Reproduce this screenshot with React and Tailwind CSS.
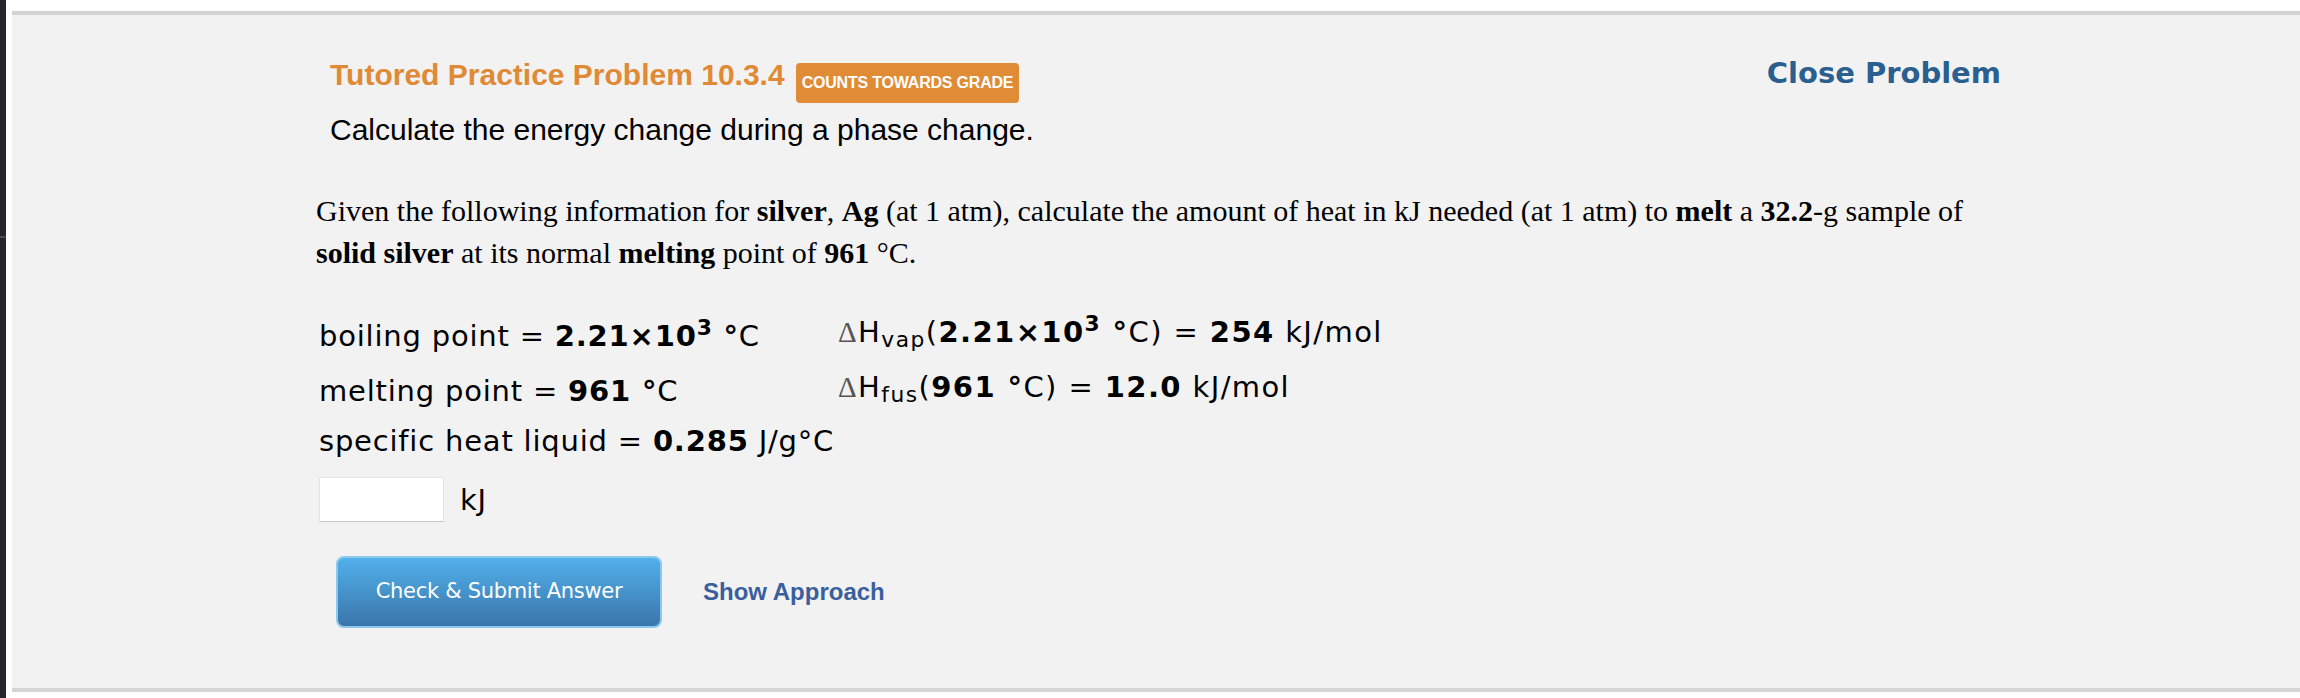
import React from "react";

const serif = { fontFamily: '"Liberation Serif", "Times New Roman", serif' };

const Delta = () => <span className="font-['Liberation_Serif',serif] text-[#555]">Δ</span>;

export default function App() {
  return (
    <div className="flex h-[698px] bg-white">
      <div className="relative w-[6px] bg-[#22262b]">
        <div className="absolute left-0 top-[236px] h-[2px] w-[6px] bg-[#4a4e53]" />
      </div>
      <div className="ml-[6px] flex-1 pt-[11px]">
        <div className="h-[681px] border-y-4 border-[#d4d4d4] bg-[#f2f2f2]">
          {/* header */}
          <div className="flex justify-between pl-[318px] pr-[299px] pt-[42px]">
            <div>
              <div className="flex items-start font-['Liberation_Sans',Arial,sans-serif]">
                <h1 className="text-[30px] leading-[36px] font-bold text-[#e08a35]">
                  Tutored Practice Problem 10.3.4
                </h1>
                <span className="ml-[11px] mt-[6px] rounded-[4px] bg-[#e08b35] px-[6px] py-[10px] text-[16px] leading-[20px] font-bold tracking-[-0.2px] text-white">
                  COUNTS TOWARDS GRADE
                </span>
              </div>
              <p className="mt-[9px] font-['Liberation_Sans',Arial,sans-serif] text-[30px] leading-[36px] text-black">
                Calculate the energy change during a phase change.
              </p>
            </div>
            <a className="-mt-[2px] font-['DejaVu_Sans',Verdana,sans-serif] text-[29px] leading-[36px] font-bold text-[#2a5f8f]">
              Close Problem
            </a>
          </div>

          <div className="pl-[304px] pt-[42px]">
            <p className="text-[30px] leading-[42px] text-black whitespace-nowrap" style={serif}>
              Given the following information for <b>silver</b>, <b>Ag</b> (at 1 atm), calculate the amount of heat in kJ needed (at 1 atm) to <b>melt</b> a <b>32.2</b>-g sample of
              <br />
              <b>solid silver</b> at its normal <b>melting</b> point of <b>961</b> °C.
            </p>

            <div className="mt-[47px] pl-[3px] font-['DejaVu_Sans',Verdana,sans-serif] text-[29px] leading-[30px] tracking-[0.8px] text-black">
              <div className="flex whitespace-nowrap">
                <div className="w-[519px]">
                  <div className="h-[55px]">
                    boiling point = <b>2.21×10<sup>3</sup> °</b>C
                  </div>
                  <div className="h-[50px]">
                    melting point = <b>961 °</b>C
                  </div>
                  <div className="h-[30px]">
                    specific heat liquid = <b>0.285</b> J/g°C
                  </div>
                </div>
                <div className="-mt-[4px] tracking-[1.4px]">
                  <div className="h-[55px]">
                    <Delta />H<sub className="tracking-[1.5px]">vap</sub>(<b>2.21×10<sup>3</sup> °</b>C) = <b>254</b> kJ/mol
                  </div>
                  <div className="h-[50px]">
                    <Delta />H<sub className="tracking-[1.5px]">fus</sub>(<b>961 °</b>C) = <b>12.0</b> kJ/mol
                  </div>
                </div>
              </div>

              <div className="mt-[21px] flex items-center">
                <div className="h-[45px] w-[125px] border border-[#e4e4e4] border-b-[#c8c8c8] bg-white" />
                <span className="ml-[16px]">kJ</span>
              </div>
            </div>

            <div className="mt-[34px] ml-[20px] flex items-center">
              <button className="h-[72px] w-[326px] rounded-[8px] border-2 border-[#8cc9ec] bg-gradient-to-b from-[#52b0eb] to-[#3a76ab] font-['DejaVu_Sans',Verdana,sans-serif] text-[21px] tracking-[-0.3px] text-white">
                Check &amp; Submit Answer
              </button>
              <a className="ml-[41px] font-['Liberation_Sans',Arial,sans-serif] text-[24px] font-bold text-[#3a5f9e]">
                Show Approach
              </a>
            </div>
          </div>
        </div>
      </div>
    </div>
  );
}
